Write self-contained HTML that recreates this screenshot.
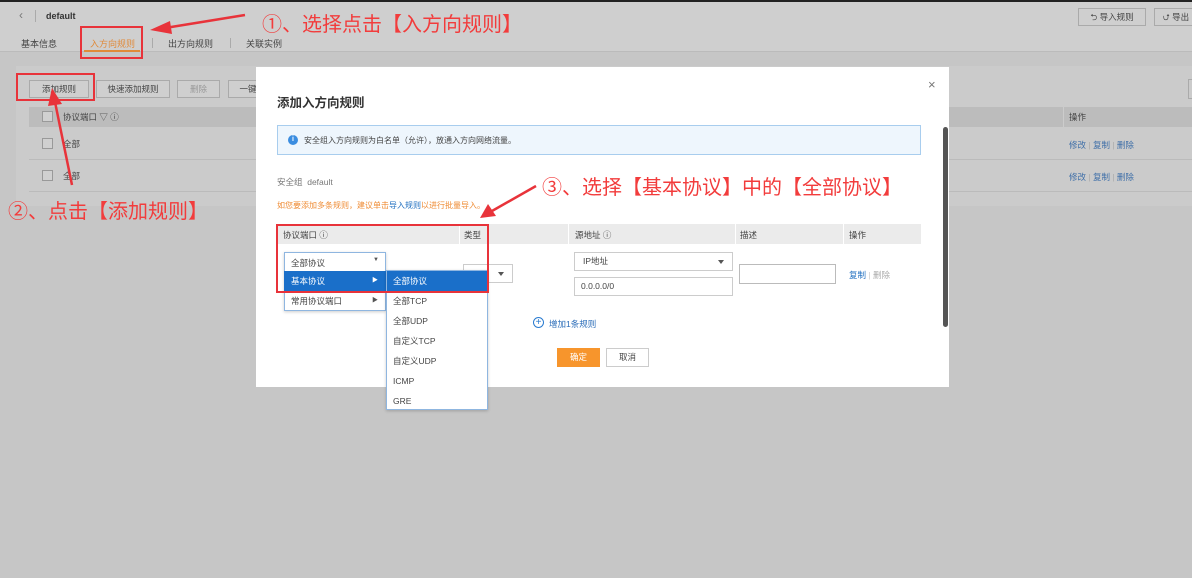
<!DOCTYPE html>
<html><head><meta charset="utf-8"><style>
*{margin:0;padding:0;box-sizing:border-box}
body{width:1192px;height:578px;overflow:hidden;background:#c6c6c6;font-family:"Liberation Sans","Noto Sans CJK SC",sans-serif;font-size:9px;color:#444;position:relative}
.a{position:absolute;white-space:nowrap}
.btn{position:absolute;border:1px solid #aaa;background:#cfcfcf;text-align:center;line-height:17px;font-size:8.5px;color:#444}
.red{color:#f23c3c;font-size:20px;position:absolute;white-space:nowrap}
.rbox{position:absolute;border:2px solid #e8333a}
.sel{position:absolute;border:1px solid #ccc;background:#fff;font-size:8.5px;line-height:17px;padding-left:8px;color:#444}
.sel.ar:after{content:"";position:absolute;right:8px;top:7px;border:3px solid transparent;border-top:4px solid #555}
.link{color:#1f6fc0}
</style></head><body>
<div class="a" style="left:0;top:0;width:1192px;height:2px;background:#222"></div>
<div class="a" style="left:0;top:2px;width:1192px;height:50px;background:#cfcfcf;border-bottom:1px solid #bbb"></div>
<div class="a" style="left:19px;top:8px;font-size:12px;color:#777">‹</div>
<div class="a" style="left:35px;top:10px;width:1px;height:12px;background:#aaa"></div>
<div class="a" style="left:46px;top:11px;font-size:9px;font-weight:bold;color:#333">default</div>
<div class="a" style="left:21px;top:37px;font-size:9px;color:#444">基本信息</div>
<div class="a" style="left:90px;top:37px;font-size:9px;color:#e08a3a">入方向规则</div>
<div class="a" style="left:84px;top:50px;width:56px;height:2px;background:#e08a3a"></div>
<div class="a" style="left:152px;top:38px;width:1px;height:10px;background:#aaa"></div>
<div class="a" style="left:168px;top:37px;font-size:9px;color:#444">出方向规则</div>
<div class="a" style="left:230px;top:38px;width:1px;height:10px;background:#aaa"></div>
<div class="a" style="left:246px;top:37px;font-size:9px;color:#444">关联实例</div>
<div class="btn" style="left:1078px;top:8px;width:68px;height:18px">⮌ 导入规则</div>
<div class="btn" style="left:1154px;top:8px;width:50px;height:18px;text-align:left;padding-left:8px">⮍ 导出</div>
<div class="a" style="left:16px;top:66px;width:1176px;height:140px;background:#cbcbcb"></div>
<div class="btn" style="left:29px;top:80px;width:60px;height:18px">添加规则</div>
<div class="btn" style="left:96px;top:80px;width:74px;height:18px">快速添加规则</div>
<div class="btn" style="left:177px;top:80px;width:43px;height:18px;color:#999">删除</div>
<div class="btn" style="left:228px;top:80px;width:40px;height:18px">一键</div>
<div class="a" style="left:29px;top:107px;width:1163px;height:20px;background:#bcbcbc"></div>
<div class="a" style="left:1063px;top:107px;width:1px;height:20px;background:#ccc"></div>
<div class="a" style="left:42px;top:111px;width:11px;height:11px;border:1px solid #999;background:#d0d0d0"></div>
<div class="a" style="left:63px;top:111px;font-size:8.5px">协议端口 ▽ ⓘ</div>
<div class="a" style="left:1069px;top:111px;font-size:8.5px">操作</div>
<div class="a" style="left:42px;top:138px;width:11px;height:11px;border:1px solid #999;background:#d0d0d0"></div>
<div class="a" style="left:63px;top:138px;font-size:8.5px">全部</div>
<div class="a" style="left:29px;top:159px;width:1163px;height:1px;background:#bbb"></div>
<div class="a" style="left:42px;top:170px;width:11px;height:11px;border:1px solid #999;background:#d0d0d0"></div>
<div class="a" style="left:63px;top:170px;font-size:8.5px">全部</div>
<div class="a" style="left:29px;top:191px;width:1163px;height:1px;background:#bbb"></div>
<div class="a link" style="left:1069px;top:139px;font-size:8.5px;color:#3f6fa8">修改 <span style="color:#aaa">|</span> 复制 <span style="color:#aaa">|</span> 删除</div>
<div class="a link" style="left:1069px;top:171px;font-size:8.5px;color:#3f6fa8">修改 <span style="color:#aaa">|</span> 复制 <span style="color:#aaa">|</span> 删除</div>
<div class="a" style="left:1188px;top:79px;width:10px;height:20px;border:1px solid #aaa"></div>

<div class="a" style="left:256px;top:67px;width:693px;height:320px;background:#fff"></div>
<div class="a" style="left:928px;top:77px;font-size:13px;color:#777">×</div>
<div class="a" style="left:277px;top:92px;font-size:12.5px;font-weight:bold;color:#333">添加入方向规则</div>
<div class="a" style="left:277px;top:125px;width:644px;height:30px;background:#eef6fd;border:1px solid #a8cdee"></div>
<div class="a" style="left:288px;top:135px;width:10px;height:10px;border-radius:50%;background:#3b8de0;color:#fff;font-size:7px;text-align:center;line-height:10px;font-weight:bold">i</div>
<div class="a" style="left:304px;top:135px;font-size:8px;color:#444">安全组入方向规则为白名单（允许），放通入方向网络流量。</div>
<div class="a" style="left:943px;top:127px;width:5px;height:200px;background:#555;border-radius:3px"></div>
<div class="a" style="left:277px;top:176px;font-size:8.5px;color:#777">安全组 &nbsp;default</div>
<div class="a" style="left:277px;top:200px;font-size:8px;color:#ef8c35">如您要添加多条规则，建议单击<span class="link">导入规则</span>以进行批量导入。</div>
<div class="a" style="left:277px;top:224px;width:644px;height:20px;background:#ebebeb"></div>
<div class="a" style="left:459px;top:224px;width:1px;height:20px;background:#fff"></div>
<div class="a" style="left:568px;top:224px;width:1px;height:20px;background:#fff"></div>
<div class="a" style="left:735px;top:224px;width:1px;height:20px;background:#fff"></div>
<div class="a" style="left:843px;top:224px;width:1px;height:20px;background:#fff"></div>
<div class="a" style="left:283px;top:229px;font-size:8.5px">协议端口 ⓘ</div>
<div class="a" style="left:464px;top:229px;font-size:8.5px">类型</div>
<div class="a" style="left:575px;top:229px;font-size:8.5px">源地址 ⓘ</div>
<div class="a" style="left:740px;top:229px;font-size:8.5px">描述</div>
<div class="a" style="left:849px;top:229px;font-size:8.5px">操作</div>
<div class="sel ar" style="left:463px;top:264px;width:50px;height:19px"></div>
<div class="sel ar" style="left:574px;top:252px;width:159px;height:19px">IP地址</div>
<div class="sel" style="left:574px;top:277px;width:159px;height:19px;padding-left:6px">0.0.0.0/0</div>
<div class="sel" style="left:739px;top:264px;width:97px;height:20px;border-color:#bbb"></div>
<div class="a" style="left:849px;top:269px;font-size:8.5px;color:#1f6fc0">复制 <span style="color:#ccc">|</span> <span style="color:#aaa">删除</span></div>
<div class="a" style="left:284px;top:252px;width:102px;height:59px;background:#fff;border:1px solid #8fb6e0;box-shadow:0 1px 3px rgba(0,0,0,.2)"></div>
<div class="a" style="left:291px;top:257px;font-size:8.5px">全部协议</div>
<div class="a" style="left:373px;top:257px;font-size:6px;color:#555">▼</div>
<div class="a" style="left:284px;top:271px;width:102px;height:20px;background:#1a6fc9;color:#fff;font-size:8.5px;line-height:20px;padding-left:7px">基本协议<span style="position:absolute;right:8px;font-size:6px">▶</span></div>
<div class="a" style="left:284px;top:291px;width:102px;height:20px;font-size:8.5px;line-height:20px;padding-left:7px">常用协议端口<span style="position:absolute;right:8px;font-size:6px;color:#555">▶</span></div>
<div class="a" style="left:386px;top:270px;width:102px;height:140px;background:#fff;border:1px solid #8fb6e0;box-shadow:0 1px 3px rgba(0,0,0,.2);font-size:8.5px;line-height:20px">
<div style="background:#1a6fc9;color:#fff;padding-left:6px">全部协议</div>
<div style="padding-left:6px">全部TCP</div><div style="padding-left:6px">全部UDP</div><div style="padding-left:6px">自定义TCP</div><div style="padding-left:6px">自定义UDP</div><div style="padding-left:6px">ICMP</div><div style="padding-left:6px">GRE</div></div>
<div class="a" style="left:533px;top:317px;width:11px;height:11px;border:1px solid #2a7bd0;border-radius:50%;color:#2a7bd0;font-size:10px;line-height:9px;text-align:center">+</div>
<div class="a" style="left:549px;top:318px;font-size:8.5px;color:#2a6cb8">增加1条规则</div>
<div class="a" style="left:557px;top:348px;width:43px;height:19px;background:#f7952c;color:#fff;font-size:8.5px;text-align:center;line-height:19px">确定</div>
<div class="a" style="left:606px;top:348px;width:43px;height:19px;border:1px solid #ccc;font-size:8.5px;text-align:center;line-height:17px">取消</div>

<div class="rbox" style="left:80px;top:26px;width:63px;height:33px"></div>
<div class="rbox" style="left:16px;top:73px;width:79px;height:28px"></div>
<div class="rbox" style="left:276px;top:224px;width:213px;height:69px"></div>
<div class="red" style="left:262px;top:8px">①、选择点击【入方向规则】</div>
<div class="red" style="left:8px;top:195px">②、点击【添加规则】</div>
<div class="red" style="left:542px;top:171px">③、选择【基本协议】中的【全部协议】</div>
<svg class="a" style="left:0;top:0" width="1192" height="578">
<g fill="#e8333a" stroke="#e8333a">
<line x1="245" y1="15" x2="165" y2="28" stroke-width="2.5"/>
<polygon points="150,30 170,21 172,34" stroke="none"/>
<line x1="72" y1="185" x2="55" y2="102" stroke-width="2.5"/>
<polygon points="52,88 48,106 62,104" stroke="none"/>
<line x1="536" y1="186" x2="492" y2="211" stroke-width="2.5"/>
<polygon points="480,218 488,204 496,216" stroke="none"/>
</g></svg>
</body></html>
